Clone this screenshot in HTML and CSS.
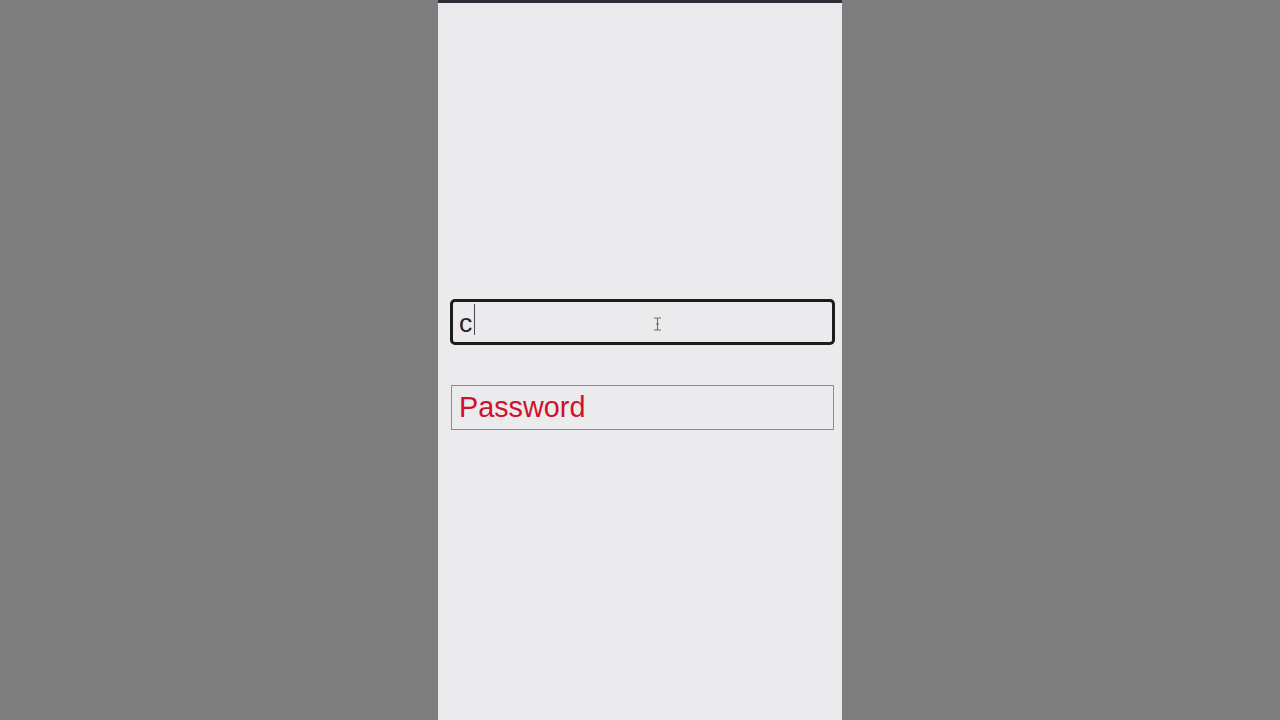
FILE: index.html
```html
<!DOCTYPE html>
<html lang="en">
<head>
<meta charset="utf-8">
<title>Login</title>
<link rel="stylesheet" href="styles.css">
</head>
<body>
<div class="stage">
  <main class="phone">
    <div class="field field-focus">
      <span class="value">c</span><span class="caret"></span>
      <svg class="ibeam" width="9" height="14" viewBox="0 0 9 14" aria-hidden="true">
        <path d="M1 1h2.5c.6 0 1 .3 1 1v10c0 .7.4 1 1 1H8M8 1H5.5c-.6 0-1 .3-1 1M4.5 12c0 .7-.4 1-1 1H1M2.8 7h3.4" fill="none" stroke="#6f6f6f" stroke-width="1.1"/>
      </svg>
    </div>
    <div class="field field-plain">
      <span class="placeholder">Password</span>
    </div>
  </main>
</div>
</body>
</html>
```

FILE: styles.css
```css
html, body {
  margin: 0;
  padding: 0;
  height: 100%;
}

body {
  background: #7f7e7f;
  font-family: "Liberation Sans", Arial, sans-serif;
}

.stage {
  display: flex;
  justify-content: center;
  height: 720px;
}

.phone {
  box-sizing: border-box;
  width: 404px;
  height: 720px;
  background: #ebeaec;
  border-top: 3px solid #2b2e36;
  padding: 296px 7px 0 12px;
  display: flex;
  flex-direction: column;
  gap: 40px;
}

.field {
  box-sizing: border-box;
  position: relative;
  display: flex;
  align-items: flex-start;
  white-space: nowrap;
}

.field-focus {
  width: 385px;
  height: 46px;
  border: 3px solid #1c1c1d;
  border-radius: 5px;
  padding: 2px 6px 0;
  font-size: 26.5px;
  line-height: 38px;
}

.field-plain {
  width: 383px;
  height: 45px;
  margin-left: 1px;
  border: 1px solid #8c8c8c;
  padding: 3px 7px 0;
  font-size: 28.8px;
  line-height: 37px;
}

.value {
  color: #262626;
}

.caret {
  display: inline-block;
  width: 1px;
  height: 31px;
  margin-top: 0;
  margin-left: 2px;
  background: #4a4a4a;
}

.placeholder {
  color: #d0112b;
}

.ibeam {
  position: absolute;
  left: 200px;
  top: 15px;
}
```
